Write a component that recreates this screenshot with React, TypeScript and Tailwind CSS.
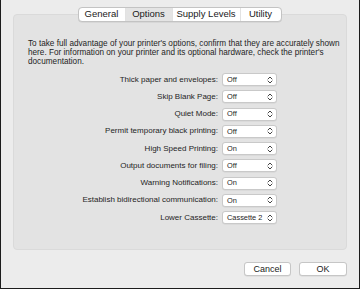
import React from "react";

const tabs = ["General", "Options", "Supply Levels", "Utility"];

const rows: { label: string; value: string }[] = [
  { label: "Thick paper and envelopes:", value: "Off" },
  { label: "Skip Blank Page:", value: "Off" },
  { label: "Quiet Mode:", value: "Off" },
  { label: "Permit temporary black printing:", value: "Off" },
  { label: "High Speed Printing:", value: "On" },
  { label: "Output documents for filing:", value: "Off" },
  { label: "Warning Notifications:", value: "On" },
  { label: "Establish bidirectional communication:", value: "On" },
  { label: "Lower Cassette:", value: "Cassette 2" },
];

function Stepper() {
  return (
    <svg width="6" height="8" viewBox="0 0 6 8" fill="none" stroke="#444" strokeWidth="1" strokeLinecap="round" strokeLinejoin="round">
      <path d="M1 3 L3 1 L5 3" />
      <path d="M1 5 L3 7 L5 5" />
    </svg>
  );
}

function PopUp({ value }: { value: string }) {
  return (
    <div className="flex items-center justify-between w-[55px] h-[13px] bg-white border border-[#c9c9c9] rounded-[3px] shadow-[0_0.5px_0_rgba(0,0,0,0.08)] pl-[4px] pr-[3px]">
      <span className="text-[7.4px] leading-none text-[#1e1e1e] whitespace-nowrap">{value}</span>
      <Stepper />
    </div>
  );
}

export default function App() {
  return (
    <div
      className="w-[360px] h-[289px] bg-[#ececec] border-x border-b border-[#1c1c1c] flex flex-col"
      style={{ fontFamily: '"Liberation Sans", Arial, sans-serif' }}
    >
      {/* Tab bar straddling the group box */}
      <div className="flex justify-center pt-[7px] relative z-10">
        <div className="flex h-[15px] bg-white border border-[#c3c3c3] rounded-[4px] overflow-hidden shadow-[0_0.5px_0_rgba(0,0,0,0.1)] ml-[-1px]">
          {tabs.map((t, i) => (
            <div
              key={t}
              className={
                "flex items-center justify-center text-[9.5px] text-[#1a1a1a] " +
                (i > 0 ? "border-l border-[#e2e2e2] " : "") +
                (t === "Options" ? "bg-[#e4e4e4] " : "")
              }
              style={{ width: [46, 47, 68, 41][i] }}
            >
              {t}
            </div>
          ))}
        </div>
      </div>

      {/* Group box */}
      <div className="mx-[12px] mt-[-8px] h-[236px] bg-[#e3e3e3] border border-[#dadada] rounded-[4px] pt-[24px]">
        <p className="px-[14px] text-[8.2px] leading-[9px] text-[#1e1e1e] whitespace-nowrap">
          To take full advantage of your printer's options, confirm that they are accurately shown
          <br />
          here. For information on your printer and its optional hardware, check the printer's
          <br />
          documentation.
        </p>
        <div className="mt-[5px] flex flex-col">
          {rows.map((r) => (
            <div key={r.label} className="flex items-center h-[17.25px]">
              <div className="w-[204px] text-right text-[8px] text-[#1e1e1e] whitespace-nowrap">{r.label}</div>
              <div className="ml-[4px]">
                <PopUp value={r.value} />
              </div>
            </div>
          ))}
        </div>
      </div>

      {/* Buttons */}
      <div className="flex justify-end gap-[8px] mt-[12px] pr-[12px]">
        <button className="w-[47px] h-[14px] bg-white border border-[#c6c6c6] rounded-[3px] text-[9px] leading-none text-[#222] shadow-[0_0.5px_0_rgba(0,0,0,0.1)]">
          Cancel
        </button>
        <button className="w-[48px] h-[14px] bg-white border border-[#c6c6c6] rounded-[3px] text-[9px] leading-none text-[#222] shadow-[0_0.5px_0_rgba(0,0,0,0.1)]">
          OK
        </button>
      </div>
    </div>
  );
}
